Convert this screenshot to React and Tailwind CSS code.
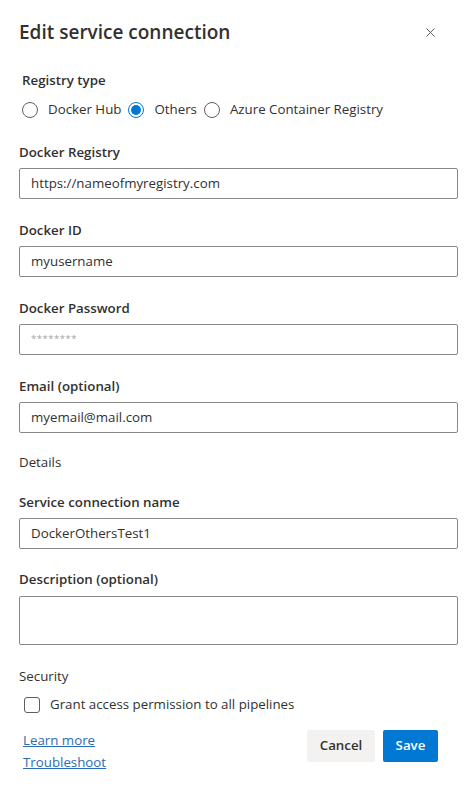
import { X } from 'lucide-react';

const font = { fontFamily: '"Segoe UI", "Open Sans", "Noto Sans", sans-serif' };

const Label = ({ children, className = '' }) => (
  <div className={`text-[13.3px] leading-[20px] font-semibold text-[#323130] ${className}`}>
    {children}
  </div>
);

const TextField = ({ value, muted, className = '' }) => (
  <div
    className={`h-[31px] w-[439px] border border-[#8a8886] rounded-[2px] flex items-center px-[11px] ${
      muted ? 'text-[#a19f9d] text-[9.5px] tracking-[0.5px]' : 'text-[#323130] text-[13.3px]'
    } ${className}`}
  >
    {value}
  </div>
);

const Radio = ({ label, checked }) => (
  <label className="flex items-center gap-[10px]">
    <span
      className={`w-[16px] h-[16px] rounded-full border flex items-center justify-center ${
        checked ? 'border-[#0078d4]' : 'border-[#605e5c]'
      }`}
    >
      {checked && <span className="w-[10px] h-[10px] rounded-full bg-[#0078d4]" />}
    </span>
    <span className="text-[13.3px] text-[#323130]">{label}</span>
  </label>
);

export default function App() {
  const fields = [
    { name: 'Docker Registry', value: 'https://nameofmyregistry.com' },
    { name: 'Docker ID', value: 'myusername' },
    { name: 'Docker Password', value: '********', muted: true },
    { name: 'Email (optional)', value: 'myemail@mail.com' },
  ];

  return (
    <div className="w-[474px] h-[788px] bg-white px-[19px] pt-[18px]" style={font}>
      <div className="flex items-center justify-between h-[28px]">
        <h1 className="text-[19px] leading-[28px] font-semibold text-[#323130]">
          Edit service connection
        </h1>
        <button className="mr-[17px] text-[#484644]">
          <X size={15} strokeWidth={1.4} />
        </button>
      </div>

      {/* registry type */}
      <div className="pl-[3px]">
        <Label className="mt-[24px]">Registry type</Label>
        <div className="flex items-center h-[20px] mt-[10px] gap-[7px]">
          <Radio label="Docker Hub" />
          <Radio label="Others" checked />
          <Radio label="Azure Container Registry" />
        </div>
      </div>

      {fields.map((f, i) => (
        <div key={f.name} className={i === 0 ? 'mt-[22px]' : 'mt-[21px]'}>
          <Label className="mb-[6px]">{f.name}</Label>
          <TextField value={f.value} muted={f.muted} />
        </div>
      ))}

      <div className="mt-[19px] text-[13.3px] leading-[20px] text-[#323130]">Details</div>

      <Label className="mt-[20px] mb-[6px]">Service connection name</Label>
      <TextField value="DockerOthersTest1" />

      <Label className="mt-[20px] mb-[7px]">Description (optional)</Label>
      <div className="h-[49px] w-[439px] border border-[#8a8886] rounded-[2px]" />

      <div className="mt-[21px] text-[13.3px] leading-[20px] text-[#323130]">Security</div>
      <label className="flex items-center gap-[10px] h-[20px] mt-[9px] pl-[5px]">
        <span className="w-[16px] h-[16px] rounded-[3px] border border-[#605e5c]" />
        <span className="text-[13.3px] text-[#323130]">Grant access permission to all pipelines</span>
      </label>

      <div className="flex justify-between mt-[14px] pl-[4px] pr-[17px]">
        <div className="flex flex-col text-[13.3px] leading-[22px] text-[#2b6cb5] underline">
          <a href="#">Learn more</a>
          <a href="#">Troubleshoot</a>
        </div>
        <div className="flex gap-[8px] items-start mt-[1px]">
          <button className="h-[32px] w-[68px] bg-[#f3f2f1] text-[#323130] text-[13.3px] font-semibold rounded-[2px]">
            Cancel
          </button>
          <button className="h-[32px] w-[55px] bg-[#0078d4] text-white text-[13.3px] font-semibold rounded-[2px]">
            Save
          </button>
        </div>
      </div>
    </div>
  );
}
